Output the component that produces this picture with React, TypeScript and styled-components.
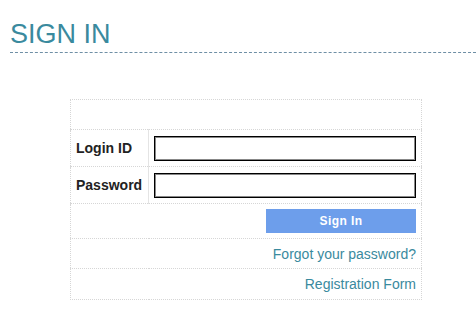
import { createGlobalStyle } from "styled-components";
import styled from "styled-components";

const GlobalStyle = createGlobalStyle`
  body {
    margin: 0;
    background: #fff;
    font-family: "Liberation Sans", Arial, sans-serif;
  }
`;

const Page = styled.div`
  width: 476px;
  height: 324px;
  overflow: hidden;
`;

const Title = styled.h1`
  margin: 20px 0 0 10px;
  padding: 0 0 4px 0;
  font-size: 27px;
  font-weight: 400;
  line-height: 28px;
  color: #3a8a9e;
  border-bottom: 1px dashed #6f8fa5;
`;

const FormTable = styled.table`
  margin: 46px 0 0 70px;
  width: 352px;
  border-collapse: collapse;
  border: 1px dotted #d6d6d6;
`;

const Row = styled.tr<{ $h: number }>`
  height: ${(p) => p.$h}px;
  border-top: 1px dotted #d6d6d6;
`;

const Label = styled.td`
  width: 68px;
  padding: 0 5px;
  font-size: 14px;
  font-weight: 700;
  color: #222;
  border-right: 1px solid #e4e4e4;
`;

const Field = styled.td`
  padding: 0 5px;
`;

const Wide = styled.td<{ $align?: string }>`
  padding: 0 5px;
  text-align: ${(p) => p.$align || "left"};
`;

const Input = styled.input`
  display: block;
  box-sizing: border-box;
  width: 262px;
  height: 25px;
  border: 1px solid #000;
  outline: 1px solid #888;
  outline-offset: -2px;
  margin: 0;
`;

const Button = styled.button`
  width: 150px;
  height: 24px;
  border: none;
  background: #6d9eeb;
  color: #fff;
  font-family: "Liberation Sans", Arial, sans-serif;
  font-size: 12px;
  font-weight: 700;
  letter-spacing: 0.4px;
  cursor: pointer;
`;

const Link = styled.a`
  font-size: 14px;
  color: #3a8a9e;
  text-decoration: none;
`;

export default function App() {
  return (
    <Page>
      <GlobalStyle />
      <Title>SIGN IN</Title>
      <FormTable>
        <tbody>
          <Row $h={30}>
            <Wide colSpan={2} />
          </Row>
          <Row $h={37}>
            <Label>Login ID</Label>
            <Field>
              <Input type="text" />
            </Field>
          </Row>
          <Row $h={37}>
            <Label>Password</Label>
            <Field>
              <Input type="password" />
            </Field>
          </Row>
          <Row $h={35}>
            <Wide colSpan={2} $align="right">
              <Button>Sign In</Button>
            </Wide>
          </Row>
          <Row $h={30}>
            <Wide colSpan={2} $align="right">
              <Link href="#">Forgot your password?</Link>
            </Wide>
          </Row>
          <Row $h={31}>
            <Wide colSpan={2} $align="right">
              <Link href="#">Registration Form</Link>
            </Wide>
          </Row>
        </tbody>
      </FormTable>
    </Page>
  );
}
